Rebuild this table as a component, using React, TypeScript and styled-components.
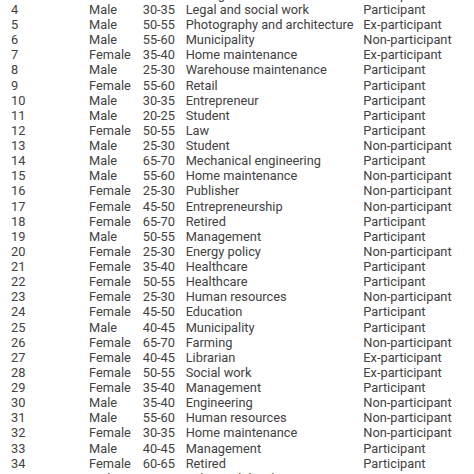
import styled, { createGlobalStyle } from "styled-components";

const GlobalStyle = createGlobalStyle`
  html, body {
    margin: 0;
    padding: 0;
    background: #ffffff;
    overflow: hidden;
  }
`;

const Sheet = styled.div`
  width: 474px;
  height: 474px;
  overflow: hidden;
  background: #ffffff;
`;

const Table = styled.div`
  margin-top: -13.2px;
  padding-left: 11px;
  display: grid;
  grid-template-columns: 78px 53.7px 43px 177.6px 1fr;
  grid-auto-rows: 15.13px;
  font-family: Roboto, "Liberation Sans", sans-serif;
  font-size: 12.8px;
  line-height: 15.13px;
  color: #424242;
`;

const Cell = styled.div`
  white-space: nowrap;
`;

type Row = [number, string, string, string, string];

const rows: Row[] = [
  [3, "Male", "40-45", "Management", "Participant"],
  [4, "Male", "30-35", "Legal and social work", "Participant"],
  [5, "Male", "50-55", "Photography and architecture", "Ex-participant"],
  [6, "Male", "55-60", "Municipality", "Non-participant"],
  [7, "Female", "35-40", "Home maintenance", "Ex-participant"],
  [8, "Male", "25-30", "Warehouse maintenance", "Participant"],
  [9, "Female", "55-60", "Retail", "Participant"],
  [10, "Male", "30-35", "Entrepreneur", "Participant"],
  [11, "Male", "20-25", "Student", "Participant"],
  [12, "Female", "50-55", "Law", "Participant"],
  [13, "Male", "25-30", "Student", "Non-participant"],
  [14, "Male", "65-70", "Mechanical engineering", "Participant"],
  [15, "Male", "55-60", "Home maintenance", "Non-participant"],
  [16, "Female", "25-30", "Publisher", "Non-participant"],
  [17, "Female", "45-50", "Entrepreneurship", "Non-participant"],
  [18, "Female", "65-70", "Retired", "Participant"],
  [19, "Male", "50-55", "Management", "Participant"],
  [20, "Female", "25-30", "Energy policy", "Non-participant"],
  [21, "Female", "35-40", "Healthcare", "Participant"],
  [22, "Female", "50-55", "Healthcare", "Participant"],
  [23, "Female", "25-30", "Human resources", "Non-participant"],
  [24, "Female", "45-50", "Education", "Participant"],
  [25, "Male", "40-45", "Municipality", "Participant"],
  [26, "Female", "65-70", "Farming", "Non-participant"],
  [27, "Female", "40-45", "Librarian", "Ex-participant"],
  [28, "Female", "50-55", "Social work", "Ex-participant"],
  [29, "Female", "35-40", "Management", "Participant"],
  [30, "Male", "35-40", "Engineering", "Non-participant"],
  [31, "Male", "55-60", "Human resources", "Non-participant"],
  [32, "Female", "30-35", "Home maintenance", "Non-participant"],
  [33, "Male", "40-45", "Management", "Participant"],
  [34, "Female", "60-65", "Retired", "Participant"],
  [35, "Male", "45-50", "Sales and development", "Non-participant"],
];

export default function App() {
  return (
    <Sheet>
      <GlobalStyle />
      <Table>
        {rows.map((row) =>
          row.map((value, i) => <Cell key={`${row[0]}-${i}`}>{value}</Cell>)
        )}
      </Table>
    </Sheet>
  );
}
